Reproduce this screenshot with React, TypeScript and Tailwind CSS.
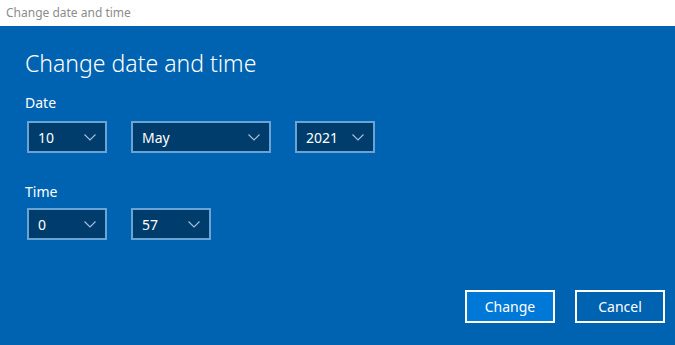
import React from "react";

const font = { fontFamily: '"Noto Sans", "Open Sans", sans-serif' };

function Chevron() {
  return (
    <svg width="12" height="7" viewBox="0 0 12 7" className="shrink-0">
      <path d="M0.5 0.5 L6 6 L11.5 0.5" fill="none" stroke="#a9c2da" strokeWidth="1.1" />
    </svg>
  );
}

function Select({ value, w }: { value: string; w: string }) {
  return (
    <div
      className={`${w} h-[32px] border-2 border-[#6aa3d6] bg-[#003d6d] flex items-center justify-between pl-[9px] pr-[9px] text-[14px] text-white`}
    >
      <span>{value}</span>
      <Chevron />
    </div>
  );
}

export default function App() {
  return (
    <div className="w-[675px] h-[345px] flex flex-col overflow-hidden" style={font}>
      <div className="h-[26px] bg-white flex items-center pl-[6px] text-[12px] text-[#8c8c8c]">
        Change date and time
      </div>
      <div className="flex-1 bg-[#0063b1] flex flex-col text-white">
        <div className="pl-[25px] pt-[21px] text-[23px] font-light leading-[32px]">Change date and time</div>
        <div className="pl-[25px] pt-[15px] text-[14px] leading-[18px]">Date</div>
        <div className="pl-[27px] pt-[9px] flex gap-[24px]">
          <Select value="10" w="w-[80px]" />
          <Select value="May" w="w-[140px]" />
          <Select value="2021" w="w-[80px]" />
        </div>
        <div className="pl-[25px] pt-[30px] text-[14px] leading-[18px]">Time</div>
        <div className="pl-[27px] pt-[7px] flex gap-[24px]">
          <Select value="0" w="w-[80px]" />
          <Select value="57" w="w-[80px]" />
        </div>
        <div className="flex justify-end gap-[20px] pr-[10px] pt-[50px]">
          <button className="w-[90px] h-[33px] border-2 border-white bg-[#0078d7] text-[14px] text-white" style={font}>
            Change
          </button>
          <button className="w-[90px] h-[33px] border-2 border-white bg-[#0063b1] text-[14px] text-white" style={font}>
            Cancel
          </button>
        </div>
      </div>
    </div>
  );
}
